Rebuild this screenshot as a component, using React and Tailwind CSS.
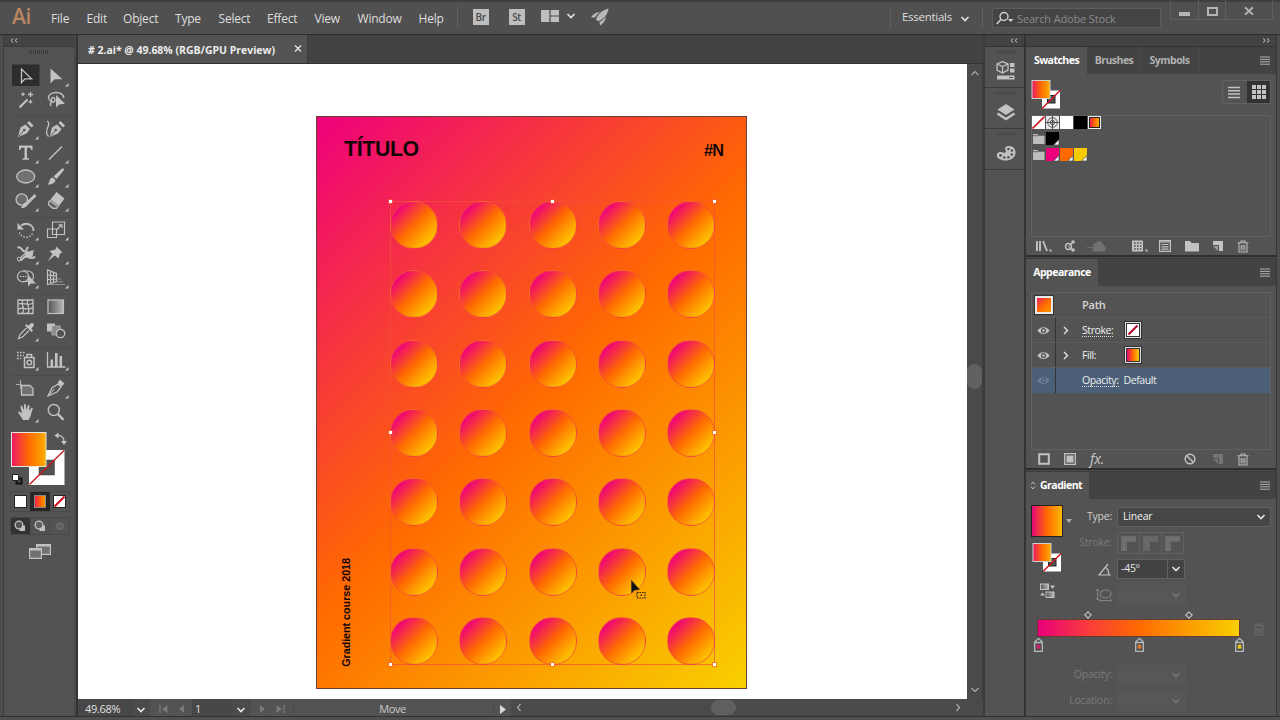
import React from "react";

const GRAD = "bg-[linear-gradient(90deg,#e6087a,#ff6a00_50%,#f7cd00)]";

/* ---------- generic pieces ---------- */
function Svg({ w, h, children, className = "" }) {
  return (
    <svg width={w} height={h} viewBox={`0 0 ${w} ${h}`} className={`block shrink-0 ${className}`} fill="none">
      {children}
    </svg>
  );
}

const Chevron = ({ color = "#e6e6e6", w = 1.6 }) => (
  <Svg w={10} h={6}>
    <path d="M1.5 1L5 4.5L8.5 1" stroke={color} strokeWidth={w} />
  </Svg>
);

const PanelMenu = () => (
  <Svg w={10} h={9}>
    <path d="M0 1H10M0 3.4H10M0 5.8H10M0 8.2H10" stroke="#b0b0b0" strokeWidth="1" />
  </Svg>
);

const Trash = ({ color = "#b8b8b8" }) => (
  <Svg w={12} h={13}>
    <path d="M0.5 2.8H11.5M4 2.5V1H8V2.5M2 3V12H10V3M4.2 5V10.4M6 5V10.4M7.8 5V10.4" stroke={color} strokeWidth="1.1" />
  </Svg>
);

const FillStroke = () => (
  <Svg w={30} h={30}>
    <rect x="11" y="10.5" width="18" height="18" fill="#fff" />
    <rect x="16.500" y="15.500" width="7.500" height="7.500" fill="#535353" stroke="#222" />
    <path d="M11 28.5L29 10.5" stroke="#c8141e" strokeWidth="1.4" />
    <rect x="1" y="0.5" width="18" height="18" fill="url(#hg)" stroke="#cfcfcf" />
  </Svg>
);

const None = ({ s }) => (
  <Svg w={s} h={s}>
    <rect width={s} height={s} fill="#fff" />
    <path d={`M0.5 ${s - 0.5}L${s - 0.5} 0.5`} stroke="#c8141e" strokeWidth="1.6" />
  </Svg>
);

/* ---------- top menu ---------- */
function MenuBar() {
  const items = [
    ["File", "w-[35.5px]"],
    ["Edit", "w-[36.5px]"],
    ["Object", "w-[52px]"],
    ["Type", "w-[43.5px]"],
    ["Select", "w-[48.5px]"],
    ["Effect", "w-[47.5px]"],
    ["View", "w-[43px]"],
    ["Window", "w-[61px]"],
    ["Help", "w-[38px]"],
  ];
  return (
    <header className="flex h-[35px] shrink-0 items-center border-b border-[#2c2c2c] bg-[#505050] shadow-[inset_0_2px_0_#3f3f3f]">
      <div className="w-[51px] pb-[3px] pl-[12px] font-['Open_Sans',sans-serif] text-[21px] leading-[30px] font-semibold tracking-[-0.3px] text-[#b98560]">Ai</div>
      <nav className="flex pt-[3px] text-[12px] tracking-[-0.2px] text-[#dedede]">
        {items.map(([t, w]) => (
          <span key={t} className={w}>{t}</span>
        ))}
      </nav>
      <div className="h-5 w-px bg-[#606060]" />
      <div className="ml-[15px] flex h-4 w-4 items-center justify-center bg-[#bebebe] text-[10px] font-semibold tracking-[-0.4px] text-[#4a4a4a]">Br</div>
      <div className="ml-5 flex h-4 w-4 items-center justify-center bg-[#bebebe] text-[10px] font-semibold tracking-[-0.4px] text-[#4a4a4a]">St</div>
      <div className="ml-4 pb-[2px]">
        <Svg w={18} h={12}>
          <path d="M0 0H8.3V12H0ZM9.6 0H18V5.4H9.6ZM9.6 6.6H18V12H9.6Z" fill="#bebebe" />
        </Svg>
      </div>
      <div className="ml-[7px] pb-[3px]"><Chevron /></div>
      <div className="ml-[15px] pb-px">
        <Svg w={18} h={18}>
          <path d="M17.5 0.5C11 2 6.500 6.500 5 11.500L7.200 13.200C12.500 11.500 16.800 6.500 17.500 0.500ZM9 4.200C5 4 2 6 0 9.500L4 9.500C5 7.200 7 5.500 9 4.200ZM14.800 8.500C15 12 12.500 15.500 9 17.500L8.500 14C11 12.700 13 11.200 14.800 8.500Z" fill="#b8b8b8" />
        </Svg>
      </div>
      <div className="ml-auto flex h-full">
        <div className="mt-2 h-5 w-px bg-[#606060]" />
        <div className="w-[56px] pl-[11px] pt-[9px] text-[11.5px] leading-4 tracking-[-0.28px] whitespace-nowrap text-[#dedede]">Essentials</div>
        <div className="pt-4 pl-[13px]"><Chevron /></div>
        <div className="mt-2 ml-[12px] h-5 w-px bg-[#606060]" />
        <div className="mt-2 ml-[9px] flex h-5 w-[169px] items-center border border-[#5c5c5c] bg-[#444] pl-[3px]">
          <Svg w={18} h={14}>
            <circle cx="8" cy="5.500" r="4" stroke="#d0d0d0" strokeWidth="1.400" />
            <path d="M5 8.500L0.700 13" stroke="#d0d0d0" strokeWidth="1.600" />
            <path d="M12 8H17.500L14.700 11Z" fill="#d0d0d0" />
          </Svg>
          <span className="ml-[3px] pt-[2px] text-[11px] tracking-[-0.15px] whitespace-nowrap text-[#8b8b8b]">Search Adobe Stock</span>
        </div>
        <div className="ml-[9px] flex h-5 w-[103px] divide-x divide-[#5e5e5e] border-x border-b border-[#5e5e5e]">
          <div className="flex w-[28px] justify-center pt-[12px]"><div className="h-1 w-[11px] bg-[#b4b4b4]" /></div>
          <div className="flex w-[27px] justify-center pt-[7px]"><div className="h-[9px] w-[11px] border-2 border-[#b4b4b4]" /></div>
          <div className="flex flex-1 justify-center pt-[7px]">
            <Svg w={10} h={8}><path d="M1 0.300L9 7.700M9 0.300L1 7.700" stroke="#b4b4b4" strokeWidth="1.900" /></Svg>
          </div>
        </div>
        <div className="w-[7px]" />
      </div>
    </header>
  );
}

/* ---------- toolbox ---------- */
const C = "#c2c2c2";
const Corner = () => <path d="M27.500 19V22.500H24Z" fill={C} />;

const TOOLS = {
  select: <path d="M10.500 5V18.500L14 14.800H20.500Z" stroke={C} strokeWidth="1.300" />,
  direct: <path d="M9.500 4.500V19.500L13.500 15.300H21.500Z" fill={C} />,
  wand: (
    <g stroke={C}>
      <path d="M8.500 18.500L16.500 10.500" strokeWidth="2.200" />
      <path d="M19.500 3V8M17 5.500H22M12 3.500V7M10.200 5.200H13.800M19.500 11V14.500M17.700 12.800H21.300" strokeWidth="1.300" />
    </g>
  ),
  lasso: (
    <g>
      <path d="M14 12C11 13.500 8 12 7.500 9C7.200 5.500 11 3.500 15 3.500C20 3.500 23 6 22.500 9M14 12C14.500 9 12 7.500 10.500 9.500C9.500 11.500 12 15 14 12ZM11 13.500C9 13.500 8.500 16 10.500 17" stroke={C} strokeWidth="1.300" />
      <path d="M15 6V18.500L18 15.500L24 14.800Z" fill={C} />
    </g>
  ),
  pen: (
    <g>
      <path d="M7 20L9.500 10.500L14.500 7.500L19 12L15.500 16.500Z" fill={C} />
      <path d="M16 6L18 4L22.500 8.500L20.500 10.500Z" fill={C} />
      <path d="M8 19L13 13.500" stroke="#535353" /><circle cx="13.300" cy="13" r="1.300" fill="#535353" />
    </g>
  ),
  curve: (
    <g>
      <path d="M8.500 20L11 10.500L16 7.500L20.500 12L17 16.500Z" fill={C} />
      <path d="M17.500 6L19.500 4L24 8.500L22 10.500Z" fill={C} />
      <path d="M9.500 19L14.500 13.500" stroke="#535353" /><circle cx="14.800" cy="13" r="1.300" fill="#535353" />
      <path d="M6 4C8.500 5 8 8 6.500 11C5 14.500 5 17 7.500 19.500" stroke={C} strokeWidth="1.300" />
    </g>
  ),
  type: <path d="M8 4.500H21.500V9H20L19.500 6.800H16V17L18 17.600V18.800H11.500V17.600L13.500 17V6.800H10L9.500 9H8Z" fill={C} />,
  line: <path d="M8 18.500L21 5.500" stroke={C} strokeWidth="1.500" />,
  ellipse: <ellipse cx="14.700" cy="11.500" rx="9" ry="6.500" fill="#727272" stroke={C} strokeWidth="1.300" />,
  brush: (
    <path d="M22.500 3.500C23 4 23 5 22.300 6L15.500 14L12.500 11.500L20.500 4C21.200 3.300 22 3 22.500 3.500ZM11.500 12.500L14.500 15C14 18 11 19.800 6.500 19.500C9 17.500 8 13 11.500 12.500Z" fill={C} />
  ),
  shaper: (
    <g>
      <circle cx="10.800" cy="10.500" r="5.700" fill="#6c6c6c" stroke={C} strokeWidth="1.300" />
      <path d="M24.500 6L15 15.500" stroke={C} strokeWidth="2.800" />
      <path d="M14.500 13.500L16.500 15.700C15 18.500 12.500 19.500 9.500 19C12 18 11.500 14.500 14.500 13.500Z" fill={C} />
    </g>
  ),
  eraser: (
    <g>
      <path d="M15.500 3L23.500 9.500L18 17L9.500 10.500Z" fill={C} />
      <path d="M9 11.500L17 17.500L15.500 19.300L12 19.300L7.500 15.800V13.500Z" fill="#666" stroke={C} strokeWidth="1.200" />
    </g>
  ),
  rotate: (
    <g>
      <path d="M10 7.500C16 3.500 22.500 7 22.500 13" stroke={C} strokeWidth="1.800" />
      <path d="M6.500 5V11.500H13Z" fill={C} />
      <path d="M21.500 15.500C18.500 21 10 20.500 8 13.500" stroke={C} strokeWidth="1.300" strokeDasharray="1.500 1.500" />
    </g>
  ),
  scale: (
    <g stroke={C} strokeWidth="1.200">
      <path d="M11.500 4H23.500V16.500H11.500Z" /><path d="M6.500 11H15.500V19.500H6.500Z" />
      <path d="M15.500 12L20.500 7M17.500 6.800H21V10.300" />
    </g>
  ),
  width: (
    <g>
      <path d="M6.500 5.500C11 4 10.500 9 13.500 9.500C16.500 9.700 14.500 5.500 17.500 5.500M7.500 18C12 19.500 11.500 14.500 15 14.500C19 14.500 20 18.500 24 14.500" stroke={C} strokeWidth="2" />
      <path d="M8 17L17 9" stroke={C} strokeWidth="1.200" /><path d="M15 10L23.500 8C21 10 23 12 21 15L13 15.500Z" fill={C} />
      <circle cx="8" cy="17" r="1.800" fill="#535353" stroke={C} />
    </g>
  ),
  pin: <path d="M15.500 4.500L21.500 10.500L19 11.500L17.500 16.500L13.700 13.500L6.500 19.500L11.500 12L8.500 9L14.500 7.500Z" fill={C} />,
  builder: (
    <g>
      <circle cx="12" cy="10.500" r="5.500" stroke={C} strokeWidth="1.200" />
      <path d="M12 5H17C20 5 22.500 7.500 22.500 10.500C22.500 13.500 20 15.500 17 15.500H12" stroke={C} strokeWidth="1.200" />
      <path d="M9 10.500H18" stroke={C} strokeWidth="1.200" strokeDasharray="1.500 1" />
      <path d="M17 9V20.500L19.800 17.500H25Z" fill={C} />
    </g>
  ),
  persp: (
    <g stroke={C} strokeWidth="1.200">
      <path d="M6.500 4V18.500L15.500 15.500V7.500ZM9.500 5V17.500M12.500 6.300V16.500M6.500 9L15.500 10.200M6.500 13.500L15.500 13" />
      <path d="M15.500 13H20M13 15.800H22M8 18.500H24" strokeWidth="0.900" stroke="#999" />
    </g>
  ),
  mesh: (
    <g stroke={C} strokeWidth="1.300">
      <path d="M7 5H22V18.500H7Z" />
      <path d="M12 5C8.500 10 16 13 11 18.500M17 5C14 9 21 14 16.500 18.500M7 9.500C12 6 16 12 22 8M7 14.500C12 10.500 16 17 22 12.500" />
    </g>
  ),
  gradient: <rect x="7" y="5" width="15.500" height="13.500" fill="url(#gg)" stroke={C} strokeWidth="1.200" />,
  dropper: (
    <g>
      <path d="M15.500 9L9 15.500L7.500 19.500L11.500 18L18 11.500" stroke={C} strokeWidth="1.200" />
      <path d="M14 6.500L20.500 13L22 11.500L20.300 9.800L22.500 7C23.500 5 22 3.500 20 4.200L17.200 6.700L15.500 5Z" fill={C} />
    </g>
  ),
  blend: (
    <g>
      <rect x="6" y="4.500" width="8" height="8" fill={C} />
      <path d="M11 7H19V16H11Z" fill="#8b8b8b" stroke="#a9a9a9" />
      <circle cx="19.500" cy="14.500" r="4.200" fill="#535353" stroke={C} strokeWidth="1.300" />
    </g>
  ),
  spray: (
    <g>
      <path d="M13.500 9.500H23V19.500H13.500ZM16 9V6.500H20.500V9" stroke={C} strokeWidth="1.500" /><circle cx="18.300" cy="14.500" r="2.300" stroke={C} strokeWidth="1.400" />
      <path d="M6 4.500H15M6 7.500H13M6 10.500H10" stroke={C} strokeWidth="1.700" strokeDasharray="1.700 1.300" />
    </g>
  ),
  graph: (
    <g stroke={C}>
      <path d="M6.500 4V19H24.500" strokeWidth="1.300" /><path d="M10.800 19V11.500M15.300 19V5M19.800 19V8" strokeWidth="2.600" />
    </g>
  ),
  artboard: (
    <g>
      <path d="M10.500 9.500H19L22 12.500V19H10.500Z" fill="#707070" stroke={C} strokeWidth="1.300" />
      <path d="M5 8.500H11M9.500 4V13" stroke="#aaa" strokeWidth="1.100" />
    </g>
  ),
  slice: (
    <g>
      <path d="M7 20L11 12L17 8L20 11L16 16Z" stroke={C} strokeWidth="1.300" />
      <path d="M16.500 7L19 3.500L23.500 7.500L20.500 10.500Z" fill={C} /><path d="M7.500 19.500L13.500 13" stroke={C} />
    </g>
  ),
  hand: (
    <path d="M12 20C10.500 17.500 7.500 13.500 7 12.300C7 11.200 8.300 11.200 9 12L11 13.500L9.500 6.500C9.500 5.300 11 5.200 11.400 6.400L12.800 10.500L13 4.800C13 3.700 14.700 3.700 14.800 4.800L15.300 10.300L16.800 5.500C17.200 4.500 18.700 4.800 18.600 6L17.800 11L20.300 8C21 7.300 22.200 8 21.700 9C20 12.500 20.300 16.500 17.500 20Z" fill={C} />
  ),
  zoom: (
    <g stroke={C}>
      <circle cx="12.800" cy="10" r="5.500" strokeWidth="1.400" /><path d="M16.800 14L22.500 19.800" strokeWidth="2.400" />
    </g>
  ),
};

const NO_CORNER = ["select", "wand", "lasso", "curve", "mesh", "gradient", "blend", "artboard", "zoom"];

function Tool({ name }) {
  return (
    <div className="h-6 w-[30px]">
      <Svg w={30} h={24}>
        {name === "select" && <rect x="1" y="0.500" width="27.500" height="21.500" fill="#2d2d2d" />}
        {TOOLS[name]}
        {!NO_CORNER.includes(name) && <Corner />}
      </Svg>
    </div>
  );
}

function ToolGroup({ names, className }) {
  return (
    <div className={`grid grid-cols-[30px_30px] ${className}`}>
      {names.map((n) => <Tool key={n} name={n} />)}
    </div>
  );
}

function Toolbox() {
  return (
    <aside className="flex w-[78px] shrink-0 border-r-2 border-[#333] bg-[#4d4d4d]">
      <div className="w-[4px] border-r border-[#3c3c3c]" />
      <div className="flex w-[71px] flex-col border-r border-[#454545] bg-[#535353]">
        <div className="flex h-[12px] items-center border-b border-[#3a3a3a] bg-[#434343] pl-[6px]">
          <Svg w={8} h={5}><path d="M3.300 0.500L1 2.500L3.300 4.500M7.300 0.500L5 2.500L7.300 4.500" stroke="#c8c8c8" /></Svg>
        </div>
        <div className="flex h-[17px] justify-center pt-[3px]">
          <Svg w={20} h={5}><path d="M0 2H20" stroke="#3b3b3b" strokeWidth="4" strokeDasharray="1 1" /></Svg>
        </div>
        <div className="pl-[7px]">
          <ToolGroup className="gap-y-px" names={["select", "direct", "wand", "lasso"]} />
          <ToolGroup className="mt-[3px] border-t border-[#4b4b4b]" names={["pen", "curve", "type", "line", "ellipse", "brush", "shaper", "eraser"]} />
          <ToolGroup className="mt-[4px] border-t border-[#4b4b4b]" names={["rotate", "scale", "width", "pin", "builder", "persp"]} />
          <ToolGroup className="mt-[4px] border-t border-[#4b4b4b]" names={["mesh", "gradient", "dropper", "blend"]} />
          <ToolGroup className="mt-[4px] border-t border-[#4b4b4b]" names={["spray", "graph"]} />
          <ToolGroup className="mt-[3px] border-t border-[#4b4b4b]" names={["artboard", "slice", "hand", "zoom"]} />
        </div>
        <div className="mt-[7px] pl-[6px]">
          <Svg w={60} h={56}>
            <path d="M19 19H54.500V54H19Z" fill="#fff" />
            <path d="M29 29H44.500V44H29Z" fill="#535353" stroke="#3a3a3a" strokeWidth="0.500" />
            <path d="M19.500 53.500L54 19.500" stroke="#c8141e" strokeWidth="1.300" />
            <rect x="1.500" y="1.500" width="34.500" height="34" fill="url(#hg)" stroke="#e9e6dc" />
            <path d="M48 4.500C52.500 4.500 54 6.500 54 11.500" stroke={C} strokeWidth="1.400" />
            <path d="M44.500 4.500L48.500 1.500V7.500ZM51 10H57L54 14Z" fill={C} />
            <path d="M6.500 47.500H11.500V52.500H6.500Z" stroke="#111" strokeWidth="2" />
            <path d="M2.500 43.500H8.500V49.500H2.500Z" fill="#fff" stroke="#222" />
          </Svg>
        </div>
        <div className="mt-[4px] ml-[6px] flex w-[60px] border border-[#4a4a4a]">
          <div className="flex h-[19px] w-[19px] items-center justify-center"><div className="h-[13px] w-[13px] border border-[#222] bg-white" /></div>
          <div className="flex h-[19px] w-[20px] items-center justify-center bg-[#262626]"><div className="h-[13px] w-[12px] border border-[#888] bg-[linear-gradient(90deg,#f02050,#ff6a00_60%,#fb9c00)]" /></div>
          <div className="flex h-[19px] w-[19px] items-center justify-center">
            <Svg w={13} h={13}><rect x="0.500" y="0.500" width="12" height="12" fill="#fff" stroke="#222" /><path d="M1.500 11.500L11.500 1.500" stroke="#d01020" strokeWidth="2.200" /></Svg>
          </div>
        </div>
        <div className="mt-[5px] ml-[6px] flex h-[18px] w-[60px] border border-[#474747]">
          {["#c2c2c2", "#c2c2c2", "#6f6f6f"].map((c, i) => (
            <div key={i} className={`flex flex-1 items-center justify-center ${i === 0 ? "bg-[#333]" : "border-l border-[#4b4b4b]"}`}>
              <Svg w={12} h={12}>
                {i < 2 && <path d="M5.500 5.500H11V11H5.500Z" fill={c} />}
                <circle cx={i < 2 ? 5 : 6} cy={i < 2 ? 5 : 6} r={i < 2 ? 3.8 : 3.2} stroke={c} strokeWidth="1.300" fill={i === 0 ? "#555" : "#606060"} />
              </Svg>
            </div>
          ))}
        </div>
        <div className="mt-[8px] ml-[24px]">
          <Svg w={24} h={17}>
            <path d="M8.600 1.600H22.400V11.400H8.600Z" fill="#727272" stroke={C} strokeWidth="1.200" /><path d="M8 2.500H23" stroke={C} strokeWidth="2" />
            <path d="M1.600 5.600H13.400V15.400H1.600Z" fill="#727272" stroke={C} strokeWidth="1.200" /><path d="M1 6.500H14" stroke={C} strokeWidth="2" />
          </Svg>
        </div>
      </div>
    </aside>
  );
}

/* ---------- document ---------- */
function Handle({ className }) {
  return <i className={`absolute h-[3px] w-[3px] bg-white outline outline-1 outline-[#f0603c]/60 ${className}`} />;
}

function Artboard() {
  return (
    <div className="absolute top-[52px] left-[238px] h-[573px] w-[431px] border border-[#6a4038] bg-[linear-gradient(135deg,#ee007c,#ff6a00_50%,#f8d000)] font-['Liberation_Sans',Arial,sans-serif] font-bold text-[#140606]">
      <div className="flex items-baseline justify-between pt-[19px] pr-[23px] pl-[27px]">
        <span className="text-[21.3px] leading-[26px] tracking-[-0.35px]">TÍTULO</span>
        <span className="text-[16.3px] tracking-[-0.9px]">#N</span>
      </div>
      <div className="absolute bottom-[21px] left-[22px] rotate-180 text-[10.8px] leading-[14px] tracking-[-0.05px] whitespace-nowrap [writing-mode:vertical-rl]">Gradient course 2018</div>
      <div className="absolute top-[84px] left-[73px] grid h-[464px] w-[325px] grid-cols-[repeat(5,48px)] content-between justify-between shadow-[inset_0_0_0_1px_#f4503cb0]">
        {Array.from({ length: 35 }, (_, i) => (
          <div key={i} className="flex h-[48px] w-[48px] items-center justify-center rounded-full border border-[#f4503c]/70 bg-[linear-gradient(135deg,#ee007c_14%,#ff6a00_50%,#fccc00_88%)]">
            <i className="h-[2px] w-[2px] bg-[#f4503c]/40" />
          </div>
        ))}
        <Handle className="-top-[1px] -left-[1px]" />
        <Handle className="-top-[1px] left-[161px]" />
        <Handle className="-top-[1px] -right-[1px]" />
        <Handle className="top-[230px] -left-[1px]" />
        <Handle className="top-[230px] -right-[1px]" />
        <Handle className="-bottom-[1px] -left-[1px]" />
        <Handle className="-bottom-[1px] left-[161px]" />
        <Handle className="-bottom-[1px] -right-[1px]" />
      </div>
      <Svg w={16} h={20} className="absolute top-[463px] left-[314px]">
        <path d="M0.500 0.500V13L3.500 10L8.500 9.500Z" fill="#111" stroke="#333" strokeWidth="0.500" />
        <path d="M6 12.500H14V18H6Z" stroke="#222" strokeWidth="1.200" strokeDasharray="1.500 1" /><path d="M9.500 15.200H11" stroke="#222" strokeWidth="1.200" />
      </Svg>
    </div>
  );
}

function StatusBar() {
  return (
    <div className="flex h-[17px] items-center bg-[#535353] text-[11px] text-[#e0e0e0]">
      <div className="flex h-full w-[55px] items-center bg-[#474747] pt-[4px] pl-[7px] tracking-[-0.3px]">49.68%</div>
      <div className="flex h-full w-[17px] items-center justify-center bg-[#4b4b4b] pt-1 pr-px"><Chevron /></div>
      <div className="flex w-[42px] items-center justify-between pt-[3px] pr-[8px] pl-[9px]">
        <Svg w={9} h={8}><path d="M1 0V8" stroke="#7a7a7a" strokeWidth="1.300" /><path d="M8.500 0V8L3 4Z" fill="#7a7a7a" /></Svg>
        <Svg w={5} h={8}><path d="M5 0V8L0 4Z" fill="#7a7a7a" /></Svg>
      </div>
      <div className="flex h-full w-[40px] items-center bg-[#474747] pt-[4px] pl-[3px]">1</div>
      <div className="flex h-full w-[19px] items-center justify-center bg-[#4b4b4b] pt-1 pr-px"><Chevron /></div>
      <div className="flex w-[42px] items-center justify-between pt-[3px] pr-[8px] pl-[9px]">
        <Svg w={5} h={8}><path d="M0 0V8L5 4Z" fill="#7a7a7a" /></Svg>
        <Svg w={9} h={8}><path d="M8 0V8" stroke="#7a7a7a" strokeWidth="1.300" /><path d="M0.500 0V8L6 4Z" fill="#7a7a7a" /></Svg>
      </div>
      <div className="flex h-full w-[201px] items-center justify-center border-x border-[#4a4a4a] pt-[4px] pr-[2px] tracking-[-0.4px] text-[#c9c9c9]">Move</div>
      <div className="flex w-[17px] justify-center pt-[3px]"><Svg w={6} h={9}><path d="M0 0V9L6 4.500Z" fill="#d8d8d8" /></Svg></div>
      <div className="flex h-full flex-1 items-center bg-[#4a4a4a] pl-[5px]">
        <Svg w={6} h={9}><path d="M4.500 1L1.500 4.500L4.500 8" stroke="#aaa" strokeWidth="1.200" /></Svg>
        <div className="ml-[189px] h-[15px] w-[25px] rounded-full bg-[#606060]" />
        <div className="mr-[22px] ml-auto"><Svg w={6} h={9}><path d="M1.500 1L4.500 4.500L1.500 8" stroke="#aaa" strokeWidth="1.200" /></Svg></div>
      </div>
    </div>
  );
}

function Document() {
  return (
    <main className="flex w-[905px] shrink-0 flex-col">
      <div className="flex h-[29px] border-b border-[#333] bg-[#434343]">
        <div className="flex w-[230px] items-center justify-between border-r border-[#3c3c3c] bg-[#535353] pt-[3px] pr-[5px] pl-[10px]">
          <span className="text-[10.5px] font-bold tracking-[-0.02px] whitespace-nowrap text-[#ececec]">#&nbsp;2.ai* @ 49.68% (RGB/GPU Preview)</span>
          <span className="mb-[5px]"><Svg w={8} h={7}><path d="M1 0.500L7 6.500M7 0.500L1 6.500" stroke="#e4e4e4" strokeWidth="1.400" /></Svg></span>
        </div>
      </div>
      <div className="flex h-[635px]">
        <div className="relative w-[889px] bg-white"><Artboard /></div>
        <div className="flex w-[16px] flex-col items-center border-r border-[#3c3c3c] bg-[#4a4a4a] pt-[6px] pb-[6px]">
          <Svg w={10} h={6}><path d="M1.500 5L5 1.500L8.500 5" stroke="#aaa" strokeWidth="1.200" /></Svg>
          <div className="mt-[288px] h-[25px] w-[15px] rounded-full bg-[#606060]" />
          <div className="mt-auto"><Chevron color="#aaa" w={1.2} /></div>
        </div>
      </div>
      <StatusBar />
    </main>
  );
}

/* ---------- collapsed dock ---------- */
function Dock() {
  const icons = [
    <Svg key="a" w={20} h={20}>
      <path d="M6.500 0.700L12 3V9L6.500 12L1 9V3ZM1 3L6.500 5.500L12 3M6.500 5.500V12" stroke={C} strokeWidth="1.300" />
      <path d="M14 2H18.500V6H14ZM14 7.500H18.500V11.500H14ZM1 14.500H18.500V18.500H1Z" fill={C} /><path d="M13 16.500H17" stroke="#555" />
    </Svg>,
    <Svg key="b" w={20} h={20}>
      <path d="M10 2L18.500 7.500L10 13L1.500 7.500Z" fill={C} /><path d="M1.500 11.500L10 17L18.500 11.500" stroke={C} strokeWidth="2.600" />
    </Svg>,
    <Svg key="c" w={20} h={20}>
      <path d="M12 3C17 2.500 20 6 19.500 10C19 15 14 18 8.500 17.500C4 17 0.500 15 0.800 12C1 9.500 4 8.500 6.500 9.500C9.500 10.500 10.500 9 9.500 7C8.500 5 9.500 3.200 12 3Z" fill={C} />
      <g fill="#535353"><circle cx="4.500" cy="12.500" r="1.400" /><circle cx="8.300" cy="14.500" r="1.300" /><circle cx="12.500" cy="14.300" r="1.300" /><circle cx="15.800" cy="11.500" r="1.300" /><circle cx="16" cy="7.500" r="1.300" /><circle cx="12.500" cy="6" r="1.300" /></g>
    </Svg>,
  ];
  return (
    <aside className="w-[43px] shrink-0 border-r-2 border-[#333] border-l-2 border-l-[#3c3c3c] bg-[#535353]">
      <div className="flex h-[12px] items-center border-b border-[#333] bg-[#434343] pl-[25px]">
        <Svg w={8} h={5}><path d="M3.300 0.500L1 2.500L3.300 4.500M7.300 0.500L5 2.500L7.300 4.500" stroke="#c8c8c8" /></Svg>
      </div>
      {icons.map((ic, i) => (
        <div key={i} className="flex h-[41px] flex-col items-center border-b border-[#3c3c3c] pt-[3px] pl-[2px]">
          <Svg w={20} h={4}><path d="M0 2H20" stroke="#434343" strokeWidth="3" strokeDasharray="1 1" /></Svg>
          <div className="mt-[7px]">{ic}</div>
        </div>
      ))}
    </aside>
  );
}

/* ---------- right panels ---------- */
function TabRow({ children, h }) {
  return (
    <div className={`flex ${h} bg-[#434343] text-[10.5px] font-bold tracking-[-0.52px] text-[#b0b0b0]`}>
      {children}
      <div className="mr-[6px] ml-auto flex items-center"><PanelMenu /></div>
    </div>
  );
}

function SwatchesPanel() {
  return (
    <section className="flex h-[210px] flex-col border-b-2 border-[#2e2e2e] bg-[#535353]">
      <TabRow h="h-[27px]">
        <div className="flex w-[61px] items-center justify-center bg-[#535353] text-white">Swatches</div>
        <div className="flex w-[53px] items-center justify-center border-r border-[#4a4a4a] pl-[2px]">Brushes</div>
        <div className="flex w-[60px] items-center justify-center border-r border-[#4a4a4a]">Symbols</div>
      </TabRow>
      <div className="flex h-[41px] justify-between pt-[6px] pr-[5px] pl-[5px]">
        <FillStroke />
        <div className="flex h-[24px] w-[49px] border border-[#616161]">
          <div className="flex flex-1 items-center justify-center pr-[2px]"><Svg w={12} h={13}><path d="M0 1.500H12M0 4.800H12M0 8.100H12M0 11.400H12" stroke={C} strokeWidth="1.500" /></Svg></div>
          <div className="flex w-[23px] items-center justify-center bg-[#333]">
            <Svg w={14} h={14}><path d="M0 0H4V4H0ZM5 0H9V4H5ZM10 0H14V4H10ZM0 5H4V9H0ZM5 5H9V9H5ZM10 5H14V9H10ZM0 10H4V14H0ZM5 10H9V14H5ZM10 10H14V14H10Z" fill={C} /></Svg>
          </div>
        </div>
      </div>
      <div className="mx-[5px] flex h-[122px] flex-col gap-[3px] border border-[#606060]">
        <div className="flex gap-px">
          <None s={13} />
          <Svg w={13} h={13}><rect width="13" height="13" fill="#e8e8e8" /><circle cx="6.500" cy="6.500" r="4.800" stroke="#444" strokeWidth="0.900" /><circle cx="6.500" cy="6.500" r="2.200" stroke="#444" strokeWidth="0.900" /><path d="M6.500 0V13M0 6.500H13" stroke="#444" strokeWidth="0.900" /></Svg>
          <div className="h-[13px] w-[13px] bg-white" />
          <div className="h-[13px] w-[13px] bg-black" />
          <div className="h-[13px] w-[13px] border border-[#eee] bg-[#222] p-px"><div className="h-full bg-[linear-gradient(90deg,#f02050,#ff6a00_50%,#fba800)]" /></div>
        </div>
        {[["#000"], ["#ee007c", "#ff6a00", "#f8cc00"]].map((row, i) => (
          <div key={i} className="flex gap-px">
            <Svg w={13} h={13}><path d="M1 2H5.500L6.500 3.700H12.500V12H1Z" fill="#bdbdbd" /><path d="M1 3.700H6" stroke="#535353" strokeWidth="0.800" /></Svg>
            {row.map((c) => (
              <Svg key={c} w={13} h={13}><rect width="13" height="13" fill={c} /><path d="M13 7.500V13H7.500Z" fill="#fff" stroke="#333" strokeWidth="0.700" /></Svg>
            ))}
          </div>
        ))}
      </div>
      <div className="flex h-[18px] items-center pl-[10px]">
        <Svg w={16} h={12} className="mr-[12px]"><path d="M1 1V11M4 1V11M7 1L11 11" stroke={C} strokeWidth="1.900" /><path d="M13.500 9.500H15.500V11.500H13.500Z" fill={C} /></Svg>
        <Svg w={11} h={12} className="mr-[12px]"><circle cx="4.500" cy="6.500" r="3" stroke={C} strokeWidth="1.400" /><circle cx="9" cy="2" r="1.800" fill={C} /><circle cx="9" cy="10" r="1.800" fill={C} /><path d="M4.500 6.500L9 2M4.500 6.500L9 10" stroke={C} /></Svg>
        <Svg w={19} h={12} className="mr-[26px]"><path d="M0 7.500H6M6 11H17C20 10 19 6 16.500 6C16 2 12 0 9.500 3C7 3 6.500 5 7 6.500Z" fill="#707070" stroke="#707070" /></Svg>
        <Svg w={16} h={12} className="mr-[11px]"><path d="M0 0.500H11V11.500H0Z" fill={C} /><path d="M2 3H9.500M2 6H9.500M2 9H9.500" stroke="#535353" strokeWidth="1.300" strokeDasharray="1.700 1.300" /><path d="M13.500 9.500H15.500V11.500H13.500Z" fill={C} /></Svg>
        <Svg w={12} h={12} className="mr-[14px]"><path d="M0.600 0.600H11.400V11.400H0.600ZM0.600 2H11.400" stroke={C} strokeWidth="1.200" /><path d="M2.500 4.500H9.500M2.500 6.800H9.500M2.500 9.100H9.500" stroke={C} strokeWidth="1.200" /></Svg>
        <Svg w={14} h={12} className="mr-[13px]"><path d="M0 1H5L6.500 3H14V11.500H0Z" fill={C} /></Svg>
        <Svg w={12} h={12} className="mr-[13px]"><path d="M1 1H11V11H7V5H1Z" fill={C} /><path d="M1 6H6V11Z" fill="#9a9a9a" /></Svg>
        <Trash />
      </div>
    </section>
  );
}

const Eye = ({ color = C, pupil = "#535353" }) => (
  <Svg w={13} h={9}>
    <path d="M0.500 4.500C3 0 10 0 12.500 4.500C10 9 3 9 0.500 4.500Z" fill={color} /><circle cx="6.500" cy="4.500" r="2.600" fill={pupil} /><circle cx="6.500" cy="4.500" r="1.200" fill={color} />
  </Svg>
);

function AppRow({ label, dotted, swatch, active, value }) {
  return (
    <div className={`flex h-[25px] items-center ${active ? "bg-[#4b6078]" : "border-b border-[#5c5c5c]"}`}>
      <div className="flex h-full w-[24px] items-center justify-center border-r border-[#333]"><Eye color={active ? "#6b7f97" : C} pupil={active ? "#4b6078" : "#535353"} /></div>
      <div className="w-[26px] pl-[7px]">
        {!active && <Svg w={6} h={9}><path d="M1 1L4.500 4.500L1 8" stroke="#e0e0e0" strokeWidth="1.400" /></Svg>}
      </div>
      <div className={active ? "mr-[5px]" : "mt-[2px] w-[43px]"}>
        <span className={`inline-block leading-[12px] ${dotted ? "border-b border-dotted border-[#ddd]" : ""}`}>{label}</span>
      </div>
      {value}
      {swatch}
    </div>
  );
}

function AppearancePanel() {
  return (
    <section className="flex h-[212px] flex-col border-t border-[#3c3c3c] border-b-2 border-b-[#2e2e2e] bg-[#535353]">
      <TabRow h="h-[27px]">
        <div className="flex w-[72px] items-center justify-center bg-[#535353] text-white">Appearance</div>
      </TabRow>
      <div className="mx-[5px] mt-[6px] h-[158px] border border-[#606060] text-[10.5px] tracking-[-0.42px] text-[#ececec]">
        <div className="flex h-[25px] items-center border-b border-[#5c5c5c] pl-[3px]">
          <div className="h-[18px] w-[18px] border-2 border-[#e8e8e8] bg-[linear-gradient(135deg,#f0205f,#ff6a00_50%,#fb9c00)] outline outline-1 outline-[#333]" />
          <span className="ml-[29px] text-[11px] font-semibold tracking-[-0.25px] text-[#d6d6d6]">Path</span>
        </div>
        <AppRow label="Stroke:" dotted swatch={<div className="border border-[#ddd] outline outline-1 outline-[#333]"><div className="border border-[#333]"><Svg w={12} h={12}><rect width="12" height="12" fill="#fff" /><path d="M1.500 10.500L10.500 1.500" stroke="#b00c2c" strokeWidth="2.200" /></Svg></div></div>} />
        <AppRow label="Fill:" swatch={<div className="border border-[#ddd] outline outline-1 outline-[#333]"><div className={`h-[14px] w-[14px] border border-[#333] ${GRAD}`} /></div>} />
        <AppRow label="Opacity:" dotted active value={<span>Default</span>} />
      </div>
      <div className="flex flex-1 items-center pr-[27px] pl-[12px]">
        <Svg w={12} h={12} className="mr-[14px]"><path d="M1.200 1.200H10.800V10.800H1.200Z" stroke={C} strokeWidth="2" /></Svg>
        <Svg w={12} h={12} className="mr-[14px]"><path d="M0.700 0.700H11.300V11.300H0.700Z" stroke={C} strokeWidth="1.300" /><path d="M2.500 2.500H9.500V9.500H2.500Z" fill={C} /></Svg>
        <span className="font-['Open_Sans',sans-serif] text-[14px] leading-3 tracking-[-0.2px] text-[#c8c8c8] italic">fx.</span>
        <Svg w={12} h={12} className="mr-[16px] ml-auto"><circle cx="6" cy="6" r="4.800" stroke={C} strokeWidth="1.500" /><path d="M2.700 2.700L9.300 9.300" stroke={C} strokeWidth="1.500" /></Svg>
        <Svg w={12} h={12} className="mr-[13px]"><path d="M1 1H11V11H7V5H1ZM1 6H6V11Z" fill="#737373" /></Svg>
        <Trash />
      </div>
    </section>
  );
}

function FormRow({ label, children, dim, className = "" }) {
  return (
    <div className={`flex h-[26px] items-center ${className}`}>
      <div className={`mr-[5px] flex w-[50px] justify-end whitespace-nowrap ${dim ? "text-[#7b7b7b]" : "text-[#cfcfcf]"}`}>{label}</div>
      {children}
    </div>
  );
}

const DisabledBox = () => (
  <div className="flex h-[20px] w-[69px] items-center justify-end bg-[#575757] pr-[5px]"><Chevron color="#747474" /></div>
);

const Stop = ({ c }) => (
  <Svg w={9} h={15}>
    <path d="M0.700 5L4.500 1.300L8.300 5V14.300H0.700ZM0.700 5.500H8.300" stroke="#b5babd" strokeWidth="1.300" fill="#4f4f4f" /><path d="M2.700 7.700H6.300V11.700H2.700Z" fill={c} />
  </Svg>
);

function GradientPanel() {
  return (
    <section className="flex h-[245px] flex-col border-t border-[#3c3c3c] bg-[#535353] text-[10.5px] tracking-[-0.2px]">
      <TabRow h="h-[27px]">
        <div className="flex w-[63px] items-center bg-[#535353] pl-[4px] text-white">
          <Svg w={6} h={9} className="mr-[4px]"><path d="M1 3.500L3 1L5 3.500M1 5.500L3 8L5 5.500" stroke="#bbb" /></Svg>
          Gradient
        </div>
      </TabRow>
      <div className="flex pt-[6px] pl-[5px]">
        <div className="w-[31px]">
          <div className="h-[32px] w-[32px] border border-[#222] bg-[linear-gradient(90deg,#e6087a,#ff6a00_50%,#f8b800)]" />
          <div className="mt-[6px] pl-px"><FillStroke /></div>
          <div className="mt-[10px] ml-[9px]">
            <Svg w={16} h={16}>
              <rect x="0.500" y="1" width="8" height="5.500" fill="url(#gg)" stroke={C} /><rect x="6" y="9" width="8" height="5.500" fill="url(#gg)" stroke={C} />
              <path d="M10 2.500H15L12.500 6ZM0 12.500H5L2.500 9.500Z" fill={C} />
            </Svg>
          </div>
        </div>
        <div className="pt-[14px] pl-[4px]"><Svg w={6} h={4}><path d="M0 0H6L3 4Z" fill="#b0b0b0" /></Svg></div>
        <div className="-ml-[10px]">
          <FormRow label="Type:" className="-mt-[1px]">
            <div className="flex h-[20px] w-[154px] items-center justify-between border border-[#606060] bg-[#464646] pr-[4px] pl-[5px] text-[#f0f0f0]">Linear<Chevron /></div>
          </FormRow>
          <FormRow label="Stroke:" dim>
            <div className="flex h-[22px] w-[67px] divide-x divide-[#606060] border border-[#606060]">
              {[0, 1, 2].map((i) => (
                <div key={i} className="flex flex-1 items-center justify-center"><Svg w={15} h={15}>
                  <path d="M0 0H15V6H6V15H0Z" fill={i === 1 ? "#666" : "#6c6c6c"} /><path d={i === 1 ? "M2 3L6 8V15" : "M3 15V3H15"} stroke="#777" />
                </Svg></div>
              ))}
            </div>
          </FormRow>
          <FormRow label={<Svg w={14} h={13}><path d="M13 12H1L10 1M7.500 4.500C10 6 11 9 10.500 12" stroke={C} strokeWidth="1.200" /></Svg>}>
            <div className="flex h-[20px] w-[68px] border border-[#616161] bg-[#434343] text-[#e8e8e8]">
              <div className="flex w-[50px] items-center border-r border-[#616161] pl-[3px]">-45º</div>
              <div className="flex flex-1 items-center justify-center"><Chevron /></div>
            </div>
          </FormRow>
          <FormRow label={<Svg w={17} h={14}><path d="M2.500 1V12M0.500 3L2.500 1L4.500 3M0.500 10L2.500 12L4.500 10M5 12.500H16M5 11V14M16 11V14" stroke="#858585" /><ellipse cx="10.500" cy="6" rx="5.500" ry="4" stroke="#858585" strokeWidth="1.200" /></Svg>}>
            <DisabledBox />
          </FormRow>
        </div>
      </div>
      <div className="mt-[3px] flex h-[43px] pl-[8px]">
        <div className="w-[210px]">
          <div className="flex gap-[93px] pl-[50px]">
            {[0, 1].map((i) => (
              <Svg key={i} w={8} h={8}><path d="M4 0.800L7.200 4L4 7.200L0.800 4Z" stroke={C} strokeWidth="1.100" fill="#535353" /></Svg>
            ))}
          </div>
          <div className="ml-[3px] h-[18px] w-[203px] border border-[#6a3a30] bg-[linear-gradient(90deg,#e6007a,#fa3c3c_25%,#ff6a00_50%,#f8d000)]" />
          <div className="flex justify-between"><Stop c="#d01c68" /><Stop c="#e07828" /><Stop c="#f0c820" /></div>
        </div>
        <div className="mt-[12px] ml-[9px]"><Trash color="#6c6c6c" /></div>
      </div>
      <div className="pl-[36px]">
        <FormRow label="Opacity:" dim className="mt-[8px]"><DisabledBox /></FormRow>
        <FormRow label="Location:" dim><DisabledBox /></FormRow>
      </div>
    </section>
  );
}

export default function App() {
  return (
    <div className="flex h-[720px] w-[1280px] flex-col overflow-hidden bg-[#4b4b4b] font-['Open_Sans','Noto_Sans',sans-serif]">
      <svg width="0" height="0" className="fixed">
        <defs>
          <linearGradient id="hg"><stop stopColor="#ec1868" /><stop offset="0.500" stopColor="#ff6a00" /><stop offset="1" stopColor="#fbb000" /></linearGradient>
          <linearGradient id="gg"><stop stopColor="#555" /><stop offset="1" stopColor="#b8b8b8" /></linearGradient>
        </defs>
      </svg>
      <MenuBar />
      <div className="flex h-[681px] shrink-0">
        <Toolbox />
        <Document />
        <Dock />
        <div className="flex w-[250px] shrink-0 flex-col">
          <div className="flex h-[12px] shrink-0 items-center justify-end border-b border-[#333] bg-[#434343] pr-[6px]">
            <Svg w={8} h={5}><path d="M1 0.500L3.300 2.500L1 4.500M5 0.500L7.300 2.500L5 4.500" stroke="#c8c8c8" /></Svg>
          </div>
          <SwatchesPanel />
          <div className="h-px shrink-0 bg-[#4b4b4b]" />
          <AppearancePanel />
          <div className="h-px shrink-0 bg-[#4b4b4b]" />
          <GradientPanel />
        </div>
        <div className="flex-1 border-l border-[#383838] bg-[#4d4d4d]" />
      </div>
      <div className="flex-1 border-t border-[#333] bg-[#505050]" />
    </div>
  );
}
